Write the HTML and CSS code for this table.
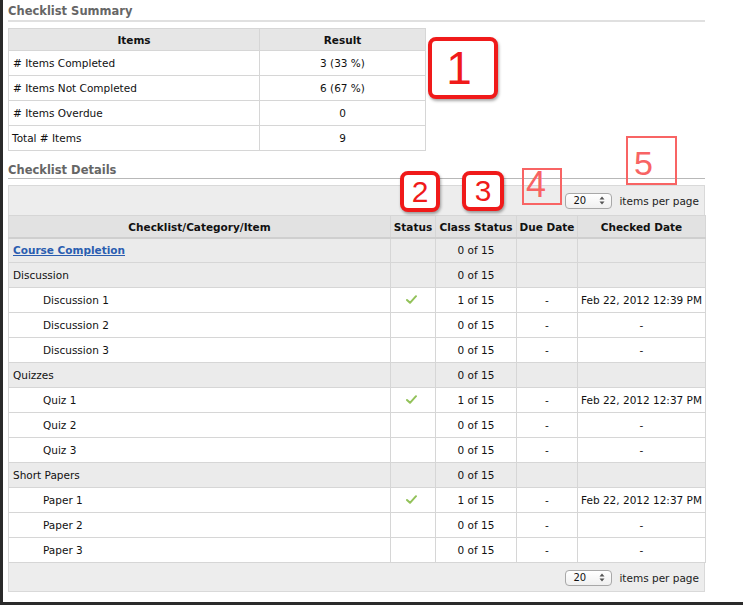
FILE: index.html
```html
<!DOCTYPE html>
<html>
<head>
<meta charset="utf-8">
<link rel="stylesheet" href="styles.css">
</head>
<body>
<div class="page">
  <h2 class="section-title first">Checklist Summary</h2>
  <table class="summary">
    <thead>
      <tr><th class="c-items">Items</th><th>Result</th></tr>
    </thead>
    <tbody>
      <tr><td class="lbl ind"># Items Completed</td><td class="ctr">3 (33 %)</td></tr>
      <tr><td class="lbl ind"># Items Not Completed</td><td class="ctr">6 (67 %)</td></tr>
      <tr><td class="lbl ind"># Items Overdue</td><td class="ctr">0</td></tr>
      <tr><td class="lbl">Total # Items</td><td class="ctr">9</td></tr>
    </tbody>
  </table>

  <h2 class="section-title second">Checklist Details</h2>
  <div class="grid-box">
    <div class="pager">
      <div class="select"><span>20</span><svg width="6" height="9" viewBox="0 0 6 9"><path d="M3 0.5 L5.5 3.5 H0.5 Z M3 8.5 L5.5 5.5 H0.5 Z" fill="#555"/></svg></div>
      <span class="ipp">items per page</span>
    </div>
    <table class="details">
      <thead>
        <tr>
          <th class="w-item">Checklist/Category/Item</th>
          <th class="w-status">Status</th>
          <th class="w-class">Class Status</th>
          <th class="w-due">Due Date</th>
          <th class="w-checked">Checked Date</th>
        </tr>
      </thead>
      <tbody>
        <tr class="cat"><td class="name"><a href="#">Course Completion</a></td><td></td><td>0 of 15</td><td></td><td></td></tr>
        <tr class="cat"><td class="name">Discussion</td><td></td><td>0 of 15</td><td></td><td></td></tr>
        <tr><td class="name sub">Discussion 1</td><td><svg class="check" width="11" height="9" viewBox="0 0 11 9"><path d="M1 5 L4 7.8 L10 1.2" fill="none" stroke="#93c25a" stroke-width="2" stroke-linecap="round" stroke-linejoin="round"/></svg></td><td>1 of 15</td><td>-</td><td>Feb 22, 2012 12:39 PM</td></tr>
        <tr><td class="name sub">Discussion 2</td><td></td><td>0 of 15</td><td>-</td><td>-</td></tr>
        <tr><td class="name sub">Discussion 3</td><td></td><td>0 of 15</td><td>-</td><td>-</td></tr>
        <tr class="cat"><td class="name">Quizzes</td><td></td><td>0 of 15</td><td></td><td></td></tr>
        <tr><td class="name sub">Quiz 1</td><td><svg class="check" width="11" height="9" viewBox="0 0 11 9"><path d="M1 5 L4 7.8 L10 1.2" fill="none" stroke="#93c25a" stroke-width="2" stroke-linecap="round" stroke-linejoin="round"/></svg></td><td>1 of 15</td><td>-</td><td>Feb 22, 2012 12:37 PM</td></tr>
        <tr><td class="name sub">Quiz 2</td><td></td><td>0 of 15</td><td>-</td><td>-</td></tr>
        <tr><td class="name sub">Quiz 3</td><td></td><td>0 of 15</td><td>-</td><td>-</td></tr>
        <tr class="cat"><td class="name">Short Papers</td><td></td><td>0 of 15</td><td></td><td></td></tr>
        <tr><td class="name sub">Paper 1</td><td><svg class="check" width="11" height="9" viewBox="0 0 11 9"><path d="M1 5 L4 7.8 L10 1.2" fill="none" stroke="#93c25a" stroke-width="2" stroke-linecap="round" stroke-linejoin="round"/></svg></td><td>1 of 15</td><td>-</td><td>Feb 22, 2012 12:37 PM</td></tr>
        <tr><td class="name sub">Paper 2</td><td></td><td>0 of 15</td><td>-</td><td>-</td></tr>
        <tr><td class="name sub">Paper 3</td><td></td><td>0 of 15</td><td>-</td><td>-</td></tr>
      </tbody>
    </table>
    <div class="pager footer">
      <div class="select"><span>20</span><svg width="6" height="9" viewBox="0 0 6 9"><path d="M3 0.5 L5.5 3.5 H0.5 Z M3 8.5 L5.5 5.5 H0.5 Z" fill="#555"/></svg></div>
      <span class="ipp">items per page</span>
    </div>
  </div>

  <div class="callout bold n1">1</div>
  <div class="callout bold n2">2</div>
  <div class="callout bold n3">3</div>
  <div class="callout thin n4">4</div>
  <div class="callout thin n5">5</div>
</div>
</body>
</html>
```

FILE: styles.css
```css
html, body {
  margin: 0;
  padding: 0;
  background: #ffffff;
}
.page {
  position: relative;
  width: 743px;
  height: 605px;
  box-sizing: border-box;
  border-left: 3px solid #2a2a2a;
  border-bottom: 3px solid #2a2a2a;
  padding: 0 0 0 5px;
  font-family: "DejaVu Sans", Verdana, sans-serif;
  font-size: 10.5px;
  color: #111;
  overflow: hidden;
}
.section-title {
  margin: 0;
  width: 697px;
  font-size: 11.5px;
  font-weight: bold;
  color: #666;
  box-sizing: border-box;
}
.section-title.first {
  padding-top: 4px;
  height: 22px;
  border-bottom: 2px solid #e0e0e0;
}
.section-title.second {
  margin-top: 9px;
  height: 19px;
  padding-top: 3px;
  border-bottom: 1px solid #b8b8b8;
}
table {
  border-collapse: collapse;
  table-layout: fixed;
}
.summary {
  margin-top: 6px;
  width: 418px;
}
.summary th, .summary td {
  border: 1px solid #d6d6d6;
  height: 25px;
  padding: 0 4px;
  box-sizing: border-box;
}
.summary th {
  background: #e6e6e6;
  font-weight: bold;
  height: 22px;
}
.summary .c-items { width: 251px; }
.summary td.lbl { padding-left: 3px; }
.summary td.lbl.ind { padding-left: 4px; }
.summary td.ctr { text-align: center; }
.grid-box {
  margin-top: 6px;
  width: 697px;
  background: #ededed;
  border: 1px solid #d9d9d9;
  box-sizing: border-box;
}
.pager {
  height: 29px;
  display: flex;
  align-items: center;
  justify-content: flex-end;
  padding-right: 5px;
  gap: 7px;
}
.pager.footer {
  height: 27px;
  margin-top: 1px;
}
.select {
  width: 47px;
  height: 16px;
  box-sizing: border-box;
  border: 1px solid #a8a8a8;
  border-radius: 4px;
  background: linear-gradient(#ffffff, #f0f0f0);
  display: flex;
  align-items: center;
  justify-content: space-between;
  padding: 0 6px 0 7px;
  font-size: 10px;
  color: #111;
}
.ipp {
  font-size: 10.5px;
  color: #222;
}
.details {
  width: 697px;
  margin-left: -1px;
}
.details th, .details td {
  border: 1px solid #d6d6d6;
  height: 25px;
  box-sizing: border-box;
  padding: 0 2px;
  text-align: center;
  white-space: nowrap;
}
.details th {
  background: #e2e2e2;
  font-weight: bold;
  height: 22px;
  padding-top: 1px;
  border-bottom: 2px solid #cfcfcf;
}
.details tbody tr { background: #ffffff; }
.details tbody tr.cat { background: #ebebeb; }
.details td.name {
  text-align: left;
  padding-left: 4px;
}
.details td.sub { padding-left: 34px; }
.details a {
  color: #2a5db0;
  font-weight: bold;
  text-decoration: underline;
}
.w-item { width: 382px; }
.w-status { width: 45px; }
.w-class { width: 81px; }
.w-due { width: 61px; }
.w-checked { width: 128px; }
.check { vertical-align: middle; margin-right: 4px; margin-top: -3px; }

.callout {
  position: absolute;
  box-sizing: border-box;
  font-family: "Liberation Sans", Arial, sans-serif;
  background: #ffffff;
  display: flex;
  justify-content: center;
  align-items: center;
  line-height: 1;
}
.callout.bold {
  border: 4px solid #f01a1a;
  border-radius: 8px;
  color: #f01a1a;
  box-shadow: 1px 2px 3px rgba(0,0,0,0.35);
}
.callout.thin {
  border: 2px solid #f86464;
  color: #f86464;
  background: transparent;
}
.n1 { left: 425px; top: 37px; width: 70px; height: 62px; font-size: 46px; padding-right: 8px; }
.n2 { left: 397px; top: 171px; width: 40px; height: 41px; font-size: 30px; }
.n3 { left: 459px; top: 171px; width: 42px; height: 40px; font-size: 30px; }
.n4 { left: 519px; top: 168px; width: 40px; height: 37px; font-size: 36px; justify-content: flex-start; align-items: flex-end; padding-left: 2px; }
.n5 { left: 623px; top: 136px; width: 51px; height: 49px; font-size: 34px; justify-content: flex-start; align-items: flex-end; padding-left: 6px; padding-bottom: 3px; }
```
